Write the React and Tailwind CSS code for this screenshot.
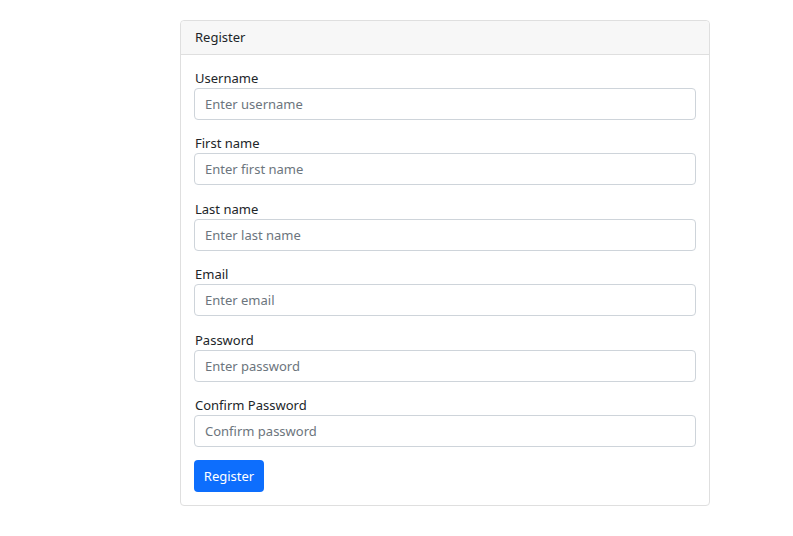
const fields = [
  { label: "Username", placeholder: "Enter username", type: "text" },
  { label: "First name", placeholder: "Enter first name", type: "text" },
  { label: "Last name", placeholder: "Enter last name", type: "text" },
  { label: "Email", placeholder: "Enter email", type: "email" },
  { label: "Password", placeholder: "Enter password", type: "password" },
  { label: "Confirm Password", placeholder: "Confirm password", type: "password" },
];

const App = () => {
  return (
    <div
      className="min-h-[536px] bg-white pl-[180px] pt-[20px] text-[13px] text-[#212529]"
      style={{ fontFamily: '"Segoe UI", "Noto Sans", "Open Sans", sans-serif' }}
    >
      <div className="w-[530px] rounded-[4px] border border-[#dfdfdf]">
        <div className="h-[34px] rounded-t-[4px] border-b border-[#dfdfdf] bg-[#f7f7f7] px-[14px] leading-[33px]">
          Register
        </div>

        <form className="flex flex-col p-[13px]">
          {fields.map((f) => (
            <div key={f.label} className="mb-[13.4px] flex flex-col">
              <label className="pl-px pt-px leading-[19px]">{f.label}</label>
              <input
                type={f.type}
                placeholder={f.placeholder}
                className="h-[32px] w-full rounded-[4px] border border-[#ced4da] px-[10px] text-[13px] outline-none placeholder:text-[#6c757d]"
              />
            </div>
          ))}

          <div>
            <button
              type="submit"
              className="h-[32px] w-[70px] rounded-[4px] bg-[#0d6efd] text-[13px] text-white"
            >
              Register
            </button>
          </div>
        </form>
      </div>
    </div>
  );
};

export default App;
